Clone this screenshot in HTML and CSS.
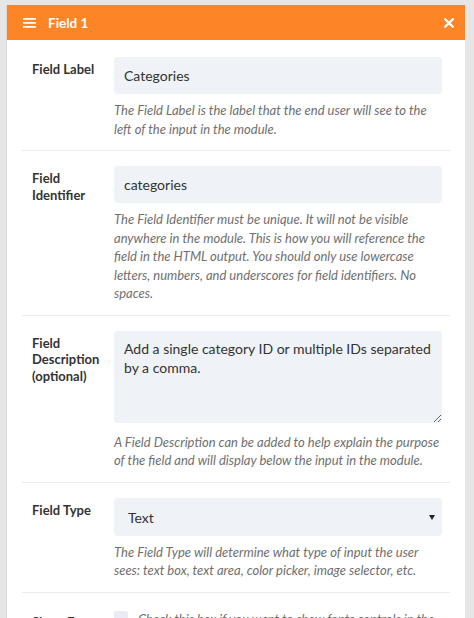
FILE: index.html
```html
<!DOCTYPE html>
<html lang="en">
<head>
<meta charset="utf-8">
<title>Field 1</title>
<link rel="stylesheet" href="styles.css">
</head>
<body>
<div class="panel">
  <div class="panel-header">
    <svg class="hamburger" width="13" height="10" viewBox="0 0 13 10" aria-hidden="true">
      <rect x="0" y="0" width="13" height="1.8" rx="0.5" fill="#fff"/>
      <rect x="0" y="4" width="13" height="1.8" rx="0.5" fill="#fff"/>
      <rect x="0" y="8" width="13" height="1.8" rx="0.5" fill="#fff"/>
    </svg>
    <span class="panel-title">Field 1</span>
    <svg class="close" width="10" height="10" viewBox="0 0 10 10" aria-hidden="true">
      <path d="M1.2 1.2 L8.8 8.8 M8.8 1.2 L1.2 8.8" stroke="#fff" stroke-width="2.3" stroke-linecap="round"/>
    </svg>
  </div>
  <div class="panel-body">
    <div class="form-row">
      <label class="field-label">Field Label</label>
      <div class="field-control">
        <input class="input" type="text" value="Categories">
        <p class="help">The Field Label is the label that the end user will see to the left of the input in the module.</p>
      </div>
    </div>
    <div class="form-row">
      <label class="field-label">Field Identifier</label>
      <div class="field-control">
        <input class="input" type="text" value="categories">
        <p class="help">The Field Identifier must be unique. It will not be visible anywhere in the module. This is how you will reference the field in the HTML output. You should only use lowercase letters, numbers, and underscores for field identifiers. No spaces.</p>
      </div>
    </div>
    <div class="form-row">
      <label class="field-label">Field Description (optional)</label>
      <div class="field-control">
        <textarea class="textarea">Add a single category ID or multiple IDs separated by a comma.</textarea>
        <p class="help">A Field Description can be added to help explain the purpose of the field and will display below the input in the module.</p>
      </div>
    </div>
    <div class="form-row">
      <label class="field-label">Field Type</label>
      <div class="field-control">
        <div class="select-wrap">
          <select class="select"><option>Text</option></select>
        </div>
        <p class="help">The Field Type will determine what type of input the user sees: text box, text area, color picker, image selector, etc.</p>
      </div>
    </div>
    <div class="form-row last">
      <label class="field-label">Show Fonts</label>
      <div class="field-control check-line">
        <span class="checkbox"></span>
        <p class="help inline">Check this box if you want to show fonts controls in the module.</p>
      </div>
    </div>
  </div>
</div>
</body>
</html>
```
FILE: styles.css
```css
html, body {
  margin: 0;
  padding: 0;
}
body {
  background: #e6e6e6;
  font-family: Lato, "Open Sans", sans-serif;
  color: #333;
  height: 618px;
  overflow: hidden;
}
.panel {
  margin: 5px 9px 0 7px;
  background: #fff;
  box-shadow: -1px 0 0 #d6d6d6;
  min-height: 700px;
}
.panel-header {
  height: 35px;
  background: #fd8526;
  display: flex;
  align-items: center;
  padding: 0 11px 0 16px;
}
.hamburger {
  display: block;
  margin-top: 1px;
}
.panel-title {
  color: #fff;
  font-weight: 700;
  font-size: 13.5px;
  margin-left: 12px;
  flex: 1;
}
.close {
  display: block;
  margin-top: 1px;
}
.panel-body {
  padding: 2px 15px 0 15px;
}
.form-row {
  display: grid;
  grid-template-columns: 82px 1fr;
  padding: 15px 8px 12px 10px;
  border-bottom: 1px solid #e9ebee;
}
.form-row.last {
  border-bottom: none;
  padding-top: 17px;
}
.field-label {
  font-weight: 700;
  font-size: 13px;
  line-height: 16.5px;
  padding-top: 4px;
  padding-right: 6px;
  color: #333;
}
.field-control {
  min-width: 0;
}
.input,
.textarea,
.select {
  display: block;
  box-sizing: border-box;
  width: 100%;
  border: none;
  border-radius: 4px;
  background: #eff2f6;
  font-family: Lato, "Open Sans", sans-serif;
  font-size: 14px;
  color: #333;
  margin: 0;
}
.input {
  height: 37px;
  padding: 0 10px;
}
.textarea {
  display: inline-block;
  vertical-align: baseline;
  height: 92px;
  padding: 8px 10px;
  line-height: 19px;
  resize: vertical;
}
.select-wrap {
  position: relative;
}
.select {
  -webkit-appearance: none;
  appearance: none;
  height: 38px;
  padding: 2px 14px 0 14px;
}
.select-wrap::after {
  content: "";
  position: absolute;
  right: 7px;
  top: 17px;
  border-left: 3px solid transparent;
  border-right: 3px solid transparent;
  border-top: 5px solid #222;
  pointer-events: none;
}
.help {
  margin: 7px 0 0 0;
  font-style: italic;
  font-size: 13px;
  line-height: 18.5px;
  color: #6f6f6f;
}
.check-line {
  display: flex;
  align-items: flex-start;
}
.checkbox {
  flex: none;
  width: 14px;
  height: 14px;
  border-radius: 2px;
  background: #e8edf5;
  margin-top: 1px;
  margin-right: 10px;
}
.help.inline {
  margin: 0;
}
```
